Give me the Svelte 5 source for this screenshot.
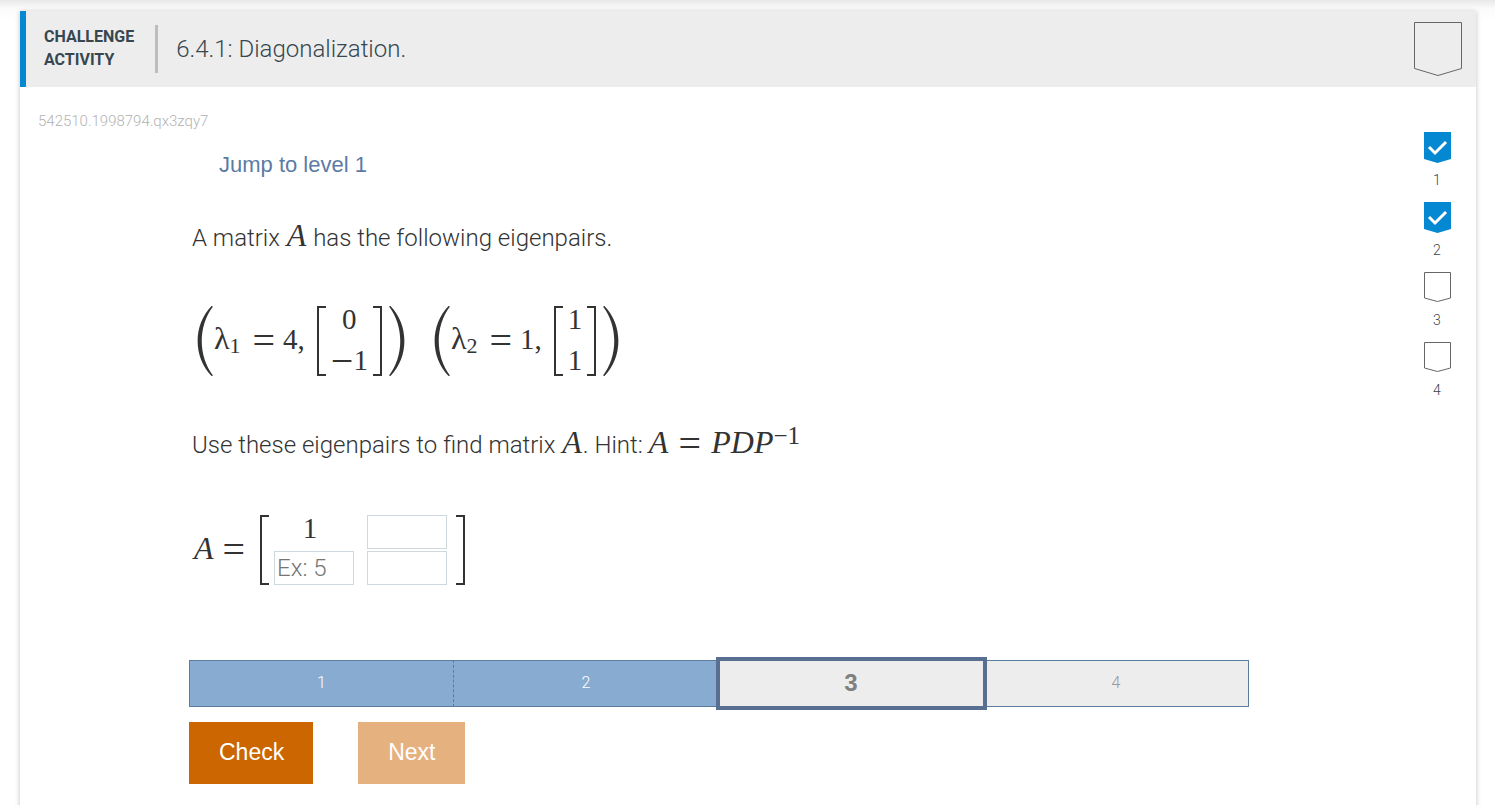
<script lang="ts">
    const levels = [
        { id: 1, done: true },
        { id: 2, done: true },
        { id: 3, done: false },
        { id: 4, done: false }
    ];

    const eigenpairs = [
        { index: 1, value: 4, vector: [0, -1] },
        { index: 2, value: 1, vector: [1, 1] }
    ];

    let current = $state(3);
    let answers = $state({ a12: '', a21: '', a22: '' });
</script>

{#snippet paren(side: string)}
    <svg class="paren" class:flip={side === 'right'} viewBox="0 0 16 70" aria-hidden="true">
        <path d="M14.500 0C-4 19 -4 51 14.500 70L16 69.500C1 50 1 20 16 .5Z" fill="#333" />
    </svg>
{/snippet}

{#snippet bracket(side: string)}
    <svg class="bracket" class:flip={side === 'right'} viewBox="0 0 9 70" aria-hidden="true">
        <path d="M9 1H1V69H9" fill="none" stroke="#333" stroke-width="2" />
    </svg>
{/snippet}

<div class="page">
    <article class="card">
        <header>
            <div class="kind">CHALLENGE<br />ACTIVITY</div>
            <h1>6.4.1: Diagonalization.</h1>
            <svg class="badge" viewBox="0 0 50 56" role="img" aria-label="Activity not completed">
                <path d="M1.500 1.500H48.500V47.500L25 54.500L1.500 47.500Z" fill="none" stroke="#666" />
            </svg>
        </header>

        <div class="body">
            <div class="content">
                <div class="code">542510.1998794.qx3zqy7</div>
                <button class="jump">Jump to level 1</button>

                <p class="intro">A matrix <i class="math">A</i> has the following eigenpairs.</p>

                <div class="pairs">
                    {#each eigenpairs as pair}
                        <div class="pair math">
                            {@render paren('left')}
                            <span class="lambda"><span class="symbol">λ</span><sub>{pair.index}</sub></span>
                            <span class="op">=</span>
                            <span class="value">{pair.value},</span>
                            {@render bracket('left')}
                            <div class="vector">
                                {#each pair.vector as entry}
                                    <span>{#if entry < 0}<span class="op">−</span>{/if}{Math.abs(entry)}</span>
                                {/each}
                            </div>
                            {@render bracket('right')}
                            {@render paren('right')}
                        </div>
                    {/each}
                </div>

                <p class="hint">
                    Use these eigenpairs to find matrix <i class="math">A</i>. Hint:
                    <span class="math"><i>A</i> <span class="op">=</span> <i>PDP</i><sup>−1</sup></span>
                </p>

                <div class="answer math">
                    <i>A</i>
                    <span class="op">=</span>
                    {@render bracket('left')}
                    <div class="matrix">
                        <span>1</span>
                        <input aria-label="Row 1, column 2" bind:value={answers.a12} />
                        <input aria-label="Row 2, column 1" placeholder="Ex: 5" bind:value={answers.a21} />
                        <input aria-label="Row 2, column 2" bind:value={answers.a22} />
                    </div>
                    {@render bracket('right')}
                </div>

                <div class="levels">
                    {#each levels as level}
                        <div class="level" class:done={level.done} class:current={level.id === current}>{level.id}</div>
                    {/each}
                </div>

                <div class="buttons">
                    <button class="action">Check</button>
                    <button class="action" disabled>Next</button>
                </div>
            </div>

            <aside>
                {#each levels as level}
                    <div class="step">
                        <svg viewBox="0 0 27 31" role="img" aria-label={level.done ? 'Completed' : 'Not completed'}>
                            {#if level.done}
                                <path d="M0 0H27V27L13.500 31L0 27Z" fill="#0588d2" />
                                <path d="M5 15L11 21L22 10" fill="none" stroke="#fff" stroke-width="3" />
                            {:else}
                                <path d="M.5 .5H26.500V26L13.500 29.500L.5 26Z" fill="#fff" stroke="#666" />
                            {/if}
                        </svg>
                        <span>{level.id}</span>
                    </div>
                {/each}
            </aside>
        </div>
    </article>
</div>

<style>
    :global(body) {
        background: #fff;
        color: #37474f;
        font-family: Roboto, "Liberation Sans", sans-serif;
        font-weight: 300;
    }
    .page {
        padding: 11px 19px 0 20px;
        overflow: hidden;
        background: linear-gradient(#e8e8e8, #fafafa 8px, #fff 20px);
    }
    .card {
        background: #fff;
        box-shadow: 0 1px 5px rgba(0, 0, 0, 0.25);
    }
    header {
        display: flex;
        align-items: center;
        box-sizing: border-box;
        height: 76px;
        padding: 0 13px 0 18px;
        border-left: 6px solid #0588d2;
        background: #ededed;
    }
    .kind {
        padding: 0 21px 2px 0;
        border-right: 3px solid #bdbdbd;
        font-size: 16px;
        line-height: 23px;
        font-weight: 700;
    }
    h1 {
        flex: 1;
        margin: 0 0 0 18px;
        font-size: 24px;
        font-weight: 300;
    }
    .badge { width: 50px; height: 56px; }

    .body { display: flex; padding-bottom: 40px; }
    .content {
        flex: 1;
        padding-left: 169px;
        color: #333;
        font-size: 24px;
    }
    .code {
        margin: 24px 0 0 -151px;
        color: #b3b3b3;
        font-size: 15px;
        line-height: 20px;
    }
    .jump {
        display: block;
        margin: 18px 0 0 30px;
        padding: 0;
        border: 0;
        background: none;
        color: #5b7ba5;
        font: 22px/32px "Liberation Sans", Arial, sans-serif;
        cursor: pointer;
    }
    p { margin: 0 0 0 3px; line-height: 40px; }
    .intro { margin-top: 37px; }
    .math {
        font-family: "Liberation Serif", "Times New Roman", serif;
        font-size: 29px;
        font-weight: 400;
        line-height: 28px;
    }
    i, .symbol { font-size: 32px; }
    i.math { margin: 0 1px; font-size: 32px; }
    .op {
        font-size: 40px;
        line-height: 0;
        vertical-align: -4px;
    }

    .pairs {
        display: flex;
        gap: 29px;
        margin: 47px 0 0 8px;
    }
    .pair { display: flex; align-items: center; }
    .paren { width: 16px; height: 70px; }
    .bracket { width: 9px; height: 70px; }
    .flip { transform: scaleX(-1); }
    .lambda { margin: 0 12px 0 1px; padding-bottom: 4px; }
    sub, sup { font-size: 22px; line-height: 0; }
    sub { vertical-align: -4px; }
    sup { font-size: 25px; vertical-align: 9px; }
    .value { margin: 0 12px 0 8px; padding-bottom: 4px; }
    .vector {
        display: grid;
        gap: 13px;
        padding: 0 5px 2px;
        text-align: center;
    }
    .pair .flip + .flip { margin-left: 7px; }

    .hint { margin-top: 49px; }
    .hint .op { margin: 0 3px; }
    .answer {
        display: flex;
        align-items: center;
        gap: 9px;
        margin: 50px 0 0 5px;
    }
    .answer > i { padding-bottom: 4px; }
    .answer .op + .bracket { margin-left: 6px; }
    .matrix {
        display: grid;
        grid-template-columns: 80px 80px;
        gap: 2px 13px;
        margin-left: -4px;
    }
    .matrix span { padding-right: 8px; line-height: 26px; text-align: center; }
    .matrix input {
        box-sizing: border-box;
        width: 80px;
        height: 34px;
        padding: 0 2px;
        border: 1px solid #cfd8dc;
        color: #333;
        font: 300 24px Roboto, sans-serif;
    }
    .matrix input::placeholder { color: #757575; }

    .levels {
        display: grid;
        grid-template-columns: repeat(4, 1fr);
        margin-top: 75px;
    }
    .level {
        box-sizing: border-box;
        height: 47px;
        border: 1px solid #5a7d9b;
        border-left-width: 0;
        background: #ededed;
        color: #999;
        font-size: 16px;
        line-height: 44px;
        text-align: center;
    }
    .level:first-child { border-left-width: 1px; border-right-style: dashed; }
    .level.done { background-color: #87abd1; color: #fff; }
    .level.current {
        z-index: 1;
        outline: 4px solid #586f92;
        outline-offset: -1px;
        color: #808080;
        font-family: "Liberation Sans", Arial, sans-serif;
        font-size: 24px;
        font-weight: 700;
    }

    .buttons { display: flex; gap: 45px; margin-top: 15px; }
    .action {
        height: 62px;
        padding: 0 29px 2px 30px;
        border: 0;
        background: #c60;
        color: #fff;
        font: 23px "Liberation Sans", Arial, sans-serif;
        cursor: pointer;
    }
    .action:disabled { background: #e5b17f; cursor: default; }

    aside {
        display: flex;
        flex-direction: column;
        align-items: center;
        gap: 8px;
        width: 78px;
        margin-left: 149px;
        padding-top: 45px;
        font-size: 14px;
    }
    .step {
        display: flex;
        flex-direction: column;
        align-items: center;
        gap: 9px;
        height: 62px;
    }
    .step svg { width: 27px; height: 31px; }
</style>
